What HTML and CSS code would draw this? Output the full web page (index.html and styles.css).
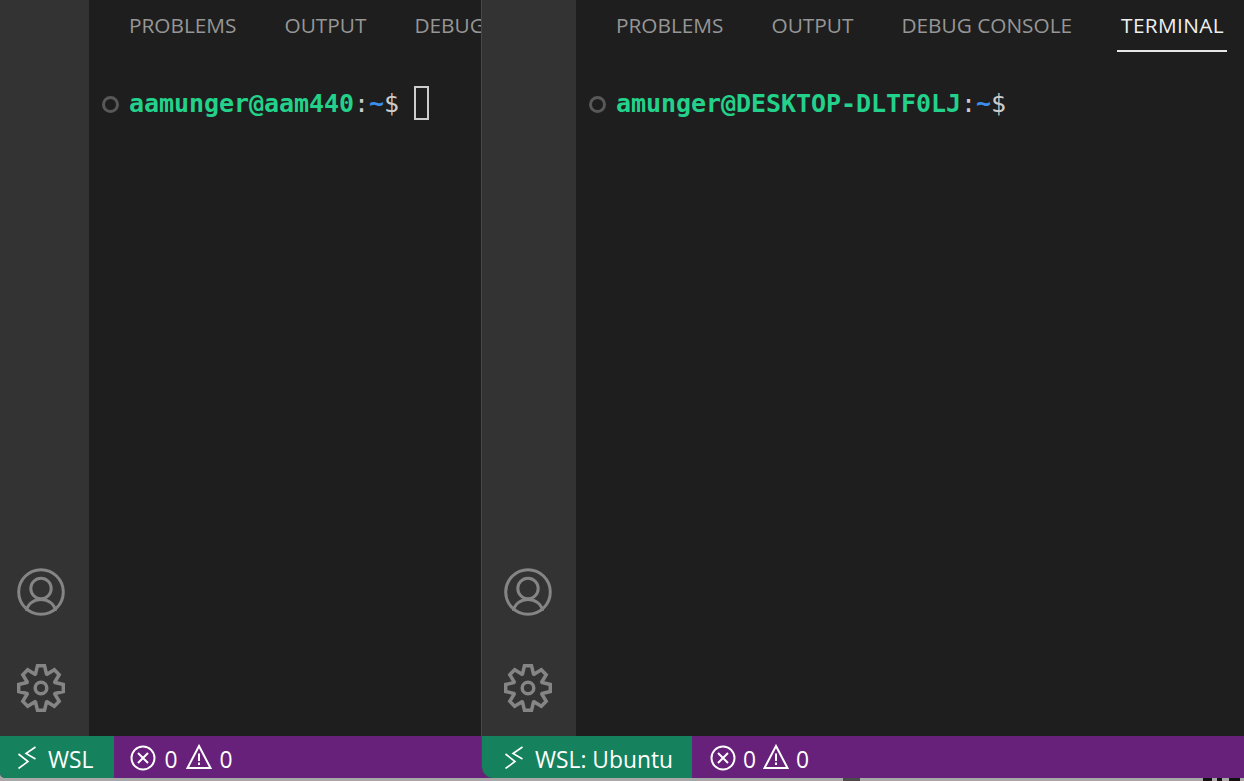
FILE: index.html
```html
<!DOCTYPE html>
<html lang="en">
<head>
<meta charset="utf-8">
<title>VS Code terminals</title>
<link rel="stylesheet" href="styles.css">
</head>
<body>
<div class="desktop">
  <section class="window window-left">
    <div class="main">
      <aside class="activity">
        <svg class="icon-account" viewBox="0 0 48 48"><circle cx="24" cy="24" r="22.3"/><circle cx="24" cy="20.5" r="10.2"/><path d="M9.5 43c1-7 7-11.500 14.500-11.500s13.500 4.500 14.500 11.500"/></svg>
        <svg class="icon-gear" viewBox="0 0 48 48"><polygon points="18.5,10 20.5,1.7 27.5,1.7 29.5,10 30,10.2 37.3,5.8 42.2,10.7 37.8,18 38,18.5 46.3,20.5 46.3,27.5 38,29.5 37.8,30 42.2,37.3 37.3,42.2 30,37.8 29.5,38 27.5,46.3 20.5,46.3 18.5,38 18,37.8 10.7,42.2 5.8,37.3 10.2,30 10,29.5 1.7,27.5 1.7,20.5 10,18.5 10.2,18 5.8,10.7 10.7,5.8 18,10.2"/><circle cx="24" cy="24" r="5.8"/></svg>
      </aside>
      <div class="panel">
        <nav class="tabs">
          <span class="tab">PROBLEMS</span>
          <span class="tab">OUTPUT</span>
          <span class="tab">DEBUG CONSOLE</span>
        </nav>
        <div class="terminal">
          <span class="dot"></span>
          <span class="prompt"><span class="host">aamunger@aam440</span><span class="colon">:</span><span class="tilde">~</span><span class="colon">$</span></span>
          <span class="cursor"></span>
        </div>
      </div>
    </div>
    <footer class="status">
      <div class="remote">
        <svg class="icon-remote" viewBox="0 0 18 23"><path d="M.5 8l9.500 7.500-9.500 7"/><path d="M17.500 1L8 7.500l9.500 5.500"/></svg>
        <span class="label">WSL</span>
      </div>
      <div class="problems">
        <svg class="icon-error" viewBox="0 0 26 26"><circle cx="13" cy="13" r="11.500"/><path d="M8 8l10 10M18 8L8 18"/></svg>
        <span class="label">0</span>
        <svg class="icon-warn" viewBox="0 0 26 26"><path d="M13 2l11.500 22H1.500z"/><path d="M13 9.500v7.500M13 18.500v2.500"/></svg>
        <span class="label">0</span>
      </div>
    </footer>
  </section>
  <section class="window window-right">
    <div class="main">
      <aside class="activity">
        <svg class="icon-account" viewBox="0 0 48 48"><circle cx="24" cy="24" r="22.3"/><circle cx="24" cy="20.5" r="10.2"/><path d="M9.5 43c1-7 7-11.500 14.500-11.500s13.500 4.500 14.500 11.500"/></svg>
        <svg class="icon-gear" viewBox="0 0 48 48"><polygon points="18.5,10 20.5,1.7 27.5,1.7 29.5,10 30,10.2 37.3,5.8 42.2,10.7 37.8,18 38,18.5 46.3,20.5 46.3,27.5 38,29.5 37.8,30 42.2,37.3 37.3,42.2 30,37.8 29.5,38 27.5,46.3 20.5,46.3 18.5,38 18,37.8 10.7,42.2 5.8,37.3 10.2,30 10,29.5 1.7,27.5 1.7,20.5 10,18.5 10.2,18 5.8,10.7 10.7,5.8 18,10.2"/><circle cx="24" cy="24" r="5.8"/></svg>
      </aside>
      <div class="panel">
        <nav class="tabs">
          <span class="tab">PROBLEMS</span>
          <span class="tab">OUTPUT</span>
          <span class="tab">DEBUG CONSOLE</span>
          <span class="tab tab-active">TERMINAL</span>
        </nav>
        <div class="terminal">
          <span class="dot"></span>
          <span class="prompt"><span class="host">amunger@DESKTOP-DLTF0LJ</span><span class="colon">:</span><span class="tilde">~</span><span class="colon">$</span></span>
        </div>
      </div>
    </div>
    <footer class="status">
      <div class="remote">
        <svg class="icon-remote" viewBox="0 0 18 23"><path d="M.5 8l9.500 7.500-9.500 7"/><path d="M17.500 1L8 7.500l9.500 5.500"/></svg>
        <span class="label">WSL: Ubuntu</span>
      </div>
      <div class="problems">
        <svg class="icon-error" viewBox="0 0 26 26"><circle cx="13" cy="13" r="11.500"/><path d="M8 8l10 10M18 8L8 18"/></svg>
        <span class="label">0</span>
        <svg class="icon-warn" viewBox="0 0 26 26"><path d="M13 2l11.500 22H1.500z"/><path d="M13 9.500v7.500M13 18.500v2.500"/></svg>
        <span class="label">0</span>
      </div>
    </footer>
  </section>
</div>
<div class="backdrop">
  <span class="backdrop-tab"></span>
  <span class="backdrop-ink ink-a"></span>
  <span class="backdrop-ink ink-b"></span>
  <span class="backdrop-ink ink-c"></span>
</div>
</body>
</html>
```
FILE: styles.css
```css
* { box-sizing: border-box; }
html, body { margin: 0; padding: 0; height: 100%; overflow: hidden; }
body { background: #a8a8a8; font-family: "Open Sans", "Noto Sans", sans-serif; }
.desktop { display: flex; height: 778px; }
.window { display: flex; flex-direction: column; min-width: 0; overflow: hidden; }
.window-left { width: 497px; flex: none; border-bottom-left-radius: 5px; }
.window-right { flex: 1; margin-left: -16px; border-left: 1px solid #484848; border-bottom-left-radius: 12px; }
.main { flex: 1; display: flex; min-height: 0; }
.activity { width: 89px; flex: none; background: #333333; display: flex; flex-direction: column; align-items: center; justify-content: flex-end; gap: 48px; padding: 0 8px 24px 0; }
.window-right .activity { width: 94px; padding-right: 3px; }
.icon-account, .icon-gear { width: 48px; height: 48px; flex: none; fill: none; stroke: #858585; }
.icon-account { stroke-width: 3; }
.icon-gear { stroke-width: 3.5; }
.panel { flex: 1; min-width: 0; background: #1e1e1e; display: flex; flex-direction: column; overflow: hidden; }
.tabs { display: flex; height: 52px; gap: 48px; padding-left: 40px; white-space: nowrap; font-size: 20.8px; line-height: 51px; color: #969696; }
.tab { flex: none; }
.tab-active { color: #f0f0f0; box-shadow: 0 -2px 0 #e7e7e7 inset; padding: 0 3.5px 0 4px; margin-left: -3px; letter-spacing: 0.35px; }
.terminal { display: flex; align-items: center; height: 36px; margin-top: 34px; padding-left: 13px; font: bold 25px/36px "DejaVu Sans Mono", monospace; letter-spacing: -0.05px; white-space: nowrap; }
.dot { width: 17px; height: 17px; border: 3.5px solid #585858; border-radius: 50%; margin-right: 10px; flex: none; }
.host { color: #23d18b; }
.colon { color: #cccccc; font-weight: normal; }
.tilde { color: #3b8eea; }
.cursor { width: 15px; height: 34px; border: 2px solid #cccccc; margin: -2px 0 0 15px; flex: none; }
.status { height: 42px; flex: none; display: flex; background: #68217a; color: #fff; font-size: 22.8px; }
.remote { background: #16825d; display: flex; align-items: center; gap: 12px; padding: 0 21px 0 18px; }
.window-right .remote { padding: 0 19px 0 23px; }
.problems { display: flex; align-items: center; padding-left: 16px; gap: 8px; }
.window-right .problems { padding-left: 18px; gap: 7px; }
.label { padding-top: 4px; }
.icon-remote { width: 18px; height: 23px; flex: none; fill: none; stroke: #fff; stroke-width: 1.6; }
.icon-error, .icon-warn { width: 26px; height: 26px; flex: none; fill: none; stroke: #fff; stroke-width: 2; }
.icon-error { margin-top: 1px; }
.backdrop { display: flex; height: 3px; }
.backdrop-tab { width: 17px; margin-left: 843px; background: #4a4a4a; }
.backdrop-ink { background: #111; }
.ink-a { width: 9px; margin-left: 343px; }
.ink-b { width: 5px; margin-left: 5px; }
.ink-c { width: 11px; margin-left: 7px; }
```
